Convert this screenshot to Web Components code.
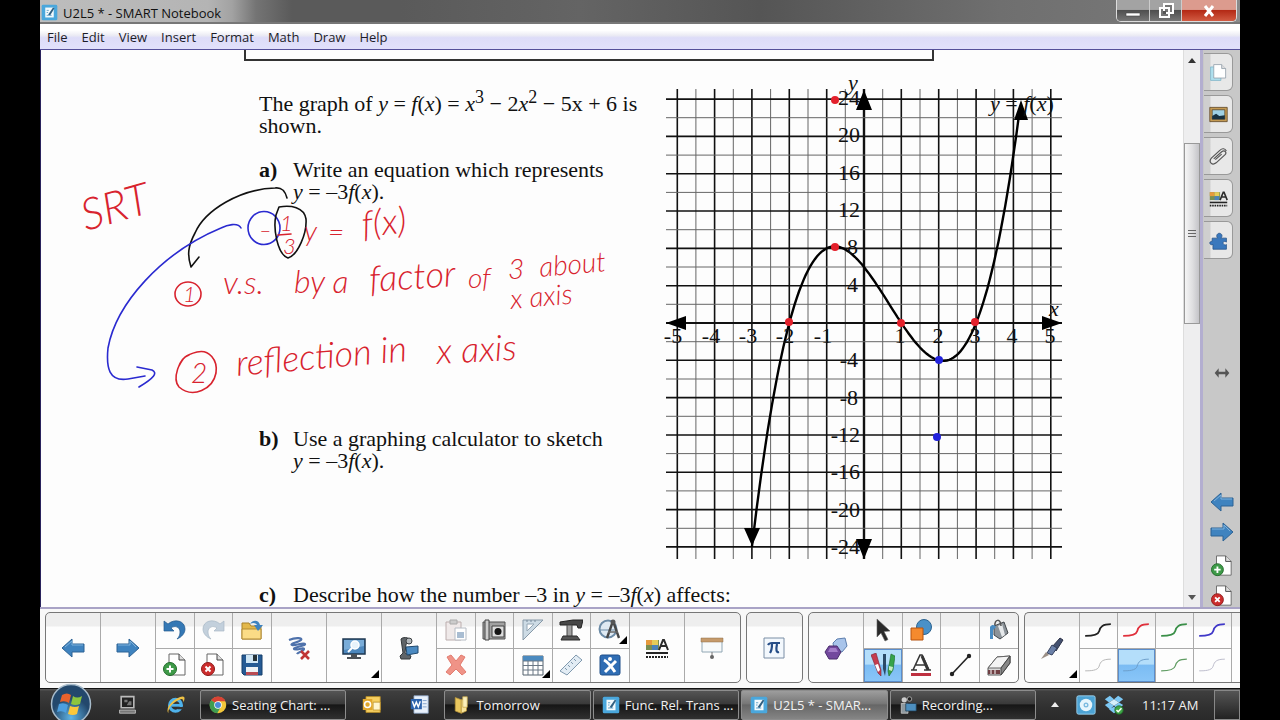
<!DOCTYPE html>
<html lang="en">
<head>
<meta charset="utf-8">
<title>U2L5 * - SMART Notebook</title>
<style>
html,body{margin:0;height:100%;background:#000}
body{font-family:"Open Sans","Noto Sans",sans-serif;overflow:hidden}
</style>
</head>
<body>
<nb-app></nb-app>
<script>
const ICONS = {
  left:'<path d="M1 12 11 3v5h12v8H11v5z" fill="#3f83bf" stroke="#2d6395"/><path d="M4 11 11 5v4h11" fill="none" stroke="#7fb2dc"/>',
  right:'<path d="M23 12 13 3v5H1v8h12v5z" fill="#3f83bf" stroke="#2d6395"/><path d="M20 11 14 5v4H2" fill="none" stroke="#7fb2dc"/>',
  undo:'<path d="M1 3v10h10L8 10c4-3 9-1 9 4 0 3-1 5-3 7 5-2 8-6 8-10C22 3 12 0 5 6z" fill="#3478b5" stroke="#24598c" stroke-width=".7"/>',
  redo:'<path d="M23 3v10H13l3-3c-4-3-9-1-9 4 0 3 1 5 3 7-5-2-8-6-8-10C2 3 12 0 19 6z" fill="#c3d0dc" stroke="#a9b8c6" stroke-width=".7"/>',
  addpage:'<path d="M6 1h10l6 6v15H6z" fill="#fff" stroke="#666"/><path d="M16 1v6h6" fill="#ddd" stroke="#444"/><circle cx="7" cy="16" r="6.500" fill="#3e9a48" stroke="#226a2a"/><path d="M7 12.500v7M3.500 16h7" stroke="#fff" stroke-width="2"/>',
  delpage:'<path d="M6 1h10l6 6v15H6z" fill="#fff" stroke="#666"/><path d="M16 1v6h6" fill="#ddd" stroke="#444"/><circle cx="7" cy="16" r="6.500" fill="#cc2d2d" stroke="#8e1a1a"/><path d="m4.500 13.500 5 5m0-5-5 5" stroke="#fff" stroke-width="2"/>',
  open:'<path d="M2 21V5h7l2 3h10v13z" fill="#e3b84a" stroke="#a9822a"/><path d="M2 21V11h19v10z" fill="#fbdc86" stroke="#b18a33"/><path d="M10 6c3-5 9-4 10 1h3l-5 6-4-6h3c-1-2-4-3-7-1z" fill="#3f83bf"/>',
  save:'<path d="M2 2h20v20H4l-2-2z" fill="#255a94" stroke="#173e6b"/><path d="M6 2h12v8H6z" fill="#cfe6f5"/><path d="M13 2h4v6h-4z" fill="#263238"/><path d="M6 14h12v8H6z" fill="#eef2f5"/><path d="M6 19h12v3H6z" fill="#ba4b52"/>',
  scribble:'<path d="M2 4c7-3 14-2 12 0S2 8 5 9s12-3 13-1S6 11 7 13s10-2 10 0-6 3-7 5" fill="none" stroke="#4f72ab" stroke-width="2.200"/><path d="m14 15 8 8m0-8-8 8" stroke="#c03434" stroke-width="2.600"/>',
  screen:'<path d="M1 3h22v15H1z" fill="#4e88bd" stroke="#1f3952" stroke-width="1.500"/><path d="M2 4h20v6L2 14z" fill="#79acd8"/><circle cx="13" cy="9" r="4" fill="#e8f3fb" stroke="#fff" stroke-width="1.500"/><path d="m10 12-4 4" stroke="#fff" stroke-width="2"/><path d="M9 18h6v3h4v2H5v-2h4z" fill="#4d5257"/>',
  doccam:'<path d="M4 3c3-3 10-1 10 3l-5 2-1 9 6 3-1 3H4l-1-3 3-3z" fill="#5f6468" stroke="#34383b"/><circle cx="12" cy="5" r="3" fill="#b4b9bd" stroke="#3d4144"/><path d="m9 11 12-1v7l-11 2z" fill="#4b8ac1" stroke="#21496e"/>',
  paste:'<path d="M2 4h15v18H2z" fill="#efe9e9" stroke="#bcaeae"/><path d="M6 2h7v4H6z" fill="#ccc" stroke="#aaa"/><path d="M11 10h11v12H11z" fill="#fff" stroke="#b6bcc4"/><path d="M13 14h7v6h-7z" fill="#a9bdd2"/>',
  cross:'<path d="m3 4 4-2 5 6 5-6 4 2-5 8 6 7-4 3-6-6-6 6-4-3 6-7z" fill="#ef9387" stroke="#e27c70"/>',
  camera:'<path d="M1 4h22v17H1z" fill="#a2a2a2" stroke="#505050"/><path d="M3 2h4v20H3z" fill="#cdcdcd" stroke="#444"/><path d="M10 8h12v11H10z" fill="#ddd" stroke="#444"/><circle cx="16" cy="13.500" r="3.500" fill="#151515"/>',
  triangle:'<path d="M2 2h20L2 22z" fill="#cddbe5" stroke="#8799a8"/><path d="M6 6h7l-7 7z" fill="#fff" stroke="#94a6b5"/><path d="M6 2v2m4-2v2m4-2v2" stroke="#76899a"/>',
  table:'<path d="M2 3h20v19H2z" fill="#fff" stroke="#53606c"/><path d="M2 3h20v5H2z" fill="#4b8abf"/><path d="M2 12.500h20M2 17h20M7 8v14M12 8v14M17 8v14M2 8h20" stroke="#697784" fill="none"/>',
  stand:'<path d="M1 4 14 2h10l-2 8h-3l-1-3H1z" fill="#484848" stroke="#222"/><path d="M8 7h5v12H8z" fill="#a2a2a2" stroke="#444"/><path d="M4 18h14l3 4H2z" fill="#565656" stroke="#2d2d2d"/>',
  ruler:'<path d="M1 18 17 2l6 5L8 22z" fill="#e2ecf4" stroke="#8099ae"/><path d="m6 15 2 2m1-5 2 2m1-5 2 2m1-5 2 2" stroke="#8099ae"/>',
  compass:'<circle cx="10" cy="11" r="8.500" fill="#dfeaf3" stroke="#6d8ca7" stroke-width="2"/><path d="M1 12h18" stroke="#6d8ca7"/><path d="M15 3 9 20M15 3l6 17" stroke="#484848" stroke-width="2.400"/><circle cx="15" cy="4" r="2.500" fill="#555"/><path d="M10 14h10" stroke="#666" stroke-width="1.500"/>',
  xman:'<rect x="2" y="2" width="20" height="20" rx="2" fill="#2f6db4" stroke="#1f4f89"/><path d="M6 7c4 2 7 6 11 12M18 8 7 19" fill="none" stroke="#fff" stroke-width="3"/><circle cx="12" cy="6" r="2" fill="#fff"/>',
  props:'<path d="M1 4h13v10H1z" fill="#788e51"/><path d="M1 4h6v5H1z" fill="#e69a3c"/><path d="M7 4h6v5H7z" fill="#e5cc58"/><path d="M7 9h6v5H7z" fill="#4b82b8"/><path d="m14 14 4-10h1l4 10m-7-4h5" fill="none" stroke="#2b2b2b" stroke-width="2"/><path d="M1 17h22" stroke="#242424" stroke-width="2"/><path d="M1 21h22" stroke="#242424" stroke-width="2" stroke-dasharray="2 1"/>',
  shade:'<path d="M2 5h20v11H2z" fill="#f7fafb" stroke="#91a7b4"/><path d="M1 2h22v4H1z" fill="#c59a6b" stroke="#8f6e4b" stroke-width=".5"/><path d="M12 16v4" stroke="#777"/><circle cx="12" cy="21" r="2" fill="#666"/>',
  pi:'<path d="M2 2h20v20H2z" fill="#f3f8fd" stroke="#7b8ea5"/><path d="M6 9c1-2 2-2 4-2h8M10 8c0 4 0 6-2 9M15 8c-1 5-1 9 2 8" fill="none" stroke="#264d87" stroke-width="2.200"/>',
  poly:'<path d="m13 3 8-1 2 8-5 6-8-2-1-7z" fill="#a8c4ea" stroke="#5e7fae"/><path d="M5 10h8l4 6-4 7H5l-4-7z" fill="#73489e" stroke="#4a2d6c"/><path d="M6 12h6l2 4H4z" fill="#a37cc8"/>',
  pointer:'<path d="m6 1 13 12-6 .5 4 8-3 1.500-4-8-4 4z" fill="#2a2a2a" stroke="#666" stroke-width=".6"/>',
  pens:'<path d="m0 2 5-2 5 17 0 6-3-3z" fill="#c53d4f" stroke="#7c2130" stroke-width=".6"/><path d="m4 12 3-1 2 6-2 2z" fill="#fff"/><path d="M12 1h3v15l-1 7-2-7z" fill="#2b4966"/><path d="m20 1 4 2-2 14-4 6-1-5z" fill="#36a34a" stroke="#1d6a2b" stroke-width=".6"/><path d="m18 13 4 1-1 4-3-1z" fill="#c7edc5"/>',
  shapes:'<circle cx="15" cy="9" r="7.500" fill="#4a91c8" stroke="#2b6391"/><path d="M2 10h12v12H2z" fill="#f58a2e" stroke="#b6530e"/>',
  textA:'<path d="M4 17 11 2h2l7 15M7 12h10M2 17h6M15 17h7" fill="none" stroke="#363636" stroke-width="1.600"/><path d="m13 3 6 14" stroke="#363636" stroke-width="3"/><path d="M2 20h20v3H2z" fill="#be3040"/>',
  line:'<path d="M4 21 20 4" stroke="#222" stroke-width="1.600"/><circle cx="4" cy="21" r="2.200" fill="#222"/><circle cx="21" cy="3" r="2.200" fill="#222"/>',
  bucket:'<path d="m7 8 10-4 4 11-8 6-6-4z" fill="#8c9399" stroke="#42474b"/><path d="m11 8 4-2 3 11-3 2z" fill="#e6e9eb"/><path d="M8 8C7 1 14 0 14 8" fill="none" stroke="#555" stroke-width="1.500"/><path d="M3 9c2-3 5-2 6 0l-3 3v9H3z" fill="#4a8cc2"/>',
  eraser:'<path d="m1 15 9-11 13-1v7l-9 12H1z" fill="#dadada" stroke="#555"/><path d="m1 15 9-11 13-1-9 12z" fill="#f4f4f4" stroke="#666"/><path d="m14 15 9-12v7l-9 12z" fill="#888" stroke="#444"/><path d="M1 17h12v4H1z" fill="#704044"/><path d="M4 17v4m4-4v4" stroke="#fff"/>',
  brush:'<path d="m12 11 8-9 3 2-7 11z" fill="#445170" stroke="#2c3247"/><path d="m7 17 5-8 5 3-5 7z" fill="#6b80a8" stroke="#37435f"/><path d="m1 23 5-7 3 3z" fill="#9b8f86"/>',
  pages:'<path d="M2 5h13v17H2z" fill="#afe0ee" stroke="#7db4c9"/><path d="M6 2h10l5 5v12H6z" fill="#fff" stroke="#8f9ca7"/><path d="M16 2v5h5" fill="#ddd" stroke="#8f9ca7"/>',
  gallery:'<path d="M1 3h22v18H1z" fill="#c49a53" stroke="#5d4523"/><path d="M4 6h16v12H4z" fill="#9fd1e4" stroke="#5d4523"/><path d="m4 14 5-3 4 3 7-1v5H4z" fill="#183241"/>',
  clip:'<path d="m6 15 10-9c4-3 7 1 4 4L9 20c-5 4-10-1-6-6L14 4c3-3 6-2 8 1M8 16l8-7" fill="none" stroke="#565656" stroke-width="1.500"/>',
  puzzle:'<path d="M4 9h7c-3-3 0-7 3-6s3 4 1 6h7v5c-3-2-5 0-4 2s3 2 4 1v6H5v-6c-4 2-6-4-1-4z" fill="#3a78bd" stroke="#275489"/>',
  expand:'<path d="m1 12 6-7v5h10V5l6 7-6 7v-5H7v5z" fill="#555"/>',
  smart:'<rect x="1" y="1" width="22" height="22" rx="2" fill="#4aa7dc"/><path d="M6 5h12v14H6z" fill="#f3fafd"/><path d="m10 15 7-10 2 1-6 10z" fill="#315f80"/><path d="M8 9h3m-3 3h2M8 16h7" stroke="#3a89b8"/>',
  laptop:'<path d="M4 2h16v14H4z" fill="#222" stroke="#bbb" stroke-width="2"/><path d="M8 6h4v3H8zm6 2h3v5h-6z" fill="#777"/><path d="M2 19h20v4H2z" fill="#777" stroke="#ccc"/>',
  ie:'<circle cx="12" cy="13" r="7.500" fill="none" stroke="#4fb2ea" stroke-width="4"/><path d="M6 13h14" stroke="#4fb2ea" stroke-width="3.500"/><path d="M14 15h9v3h-8z" fill="#333"/><path d="M3 23C-2 16 11 3 21 2c3 0 3 3 1 7 0-4-2-5-5-3C9 9 2 17 3 23z" fill="#efc245"/>',
  chrome:'<circle cx="12" cy="12" r="11" fill="#f3c73b"/><path d="M12 12 3 5.500A11 11 0 0 1 22 7H12z" fill="#d94335"/><path d="M3 5.500A11 11 0 0 0 11 23l5-9-4-2z" fill="#3f9d50"/><circle cx="12" cy="12" r="5" fill="#fff"/><circle cx="12" cy="12" r="4" fill="#4b8bd6"/>',
  outlook:'<path d="M5 2h18v20H5z" fill="#f6cf61" stroke="#b98d22"/><path d="M14 9h9v10h-9z" fill="#fff5cf" stroke="#b98d22"/><path d="M1 5h12v14H1z" fill="#e2a72c"/><circle cx="7" cy="12" r="3.800" fill="none" stroke="#fff" stroke-width="2"/>',
  word:'<path d="M5 1h18v22H5z" fill="#e8f1fb" stroke="#8fa9cb"/><path d="M16 7h5m-5 4h5m-5 4h5" stroke="#6f93c3"/><path d="M1 5h14v13H1z" fill="#2c63ad"/><path d="m3 8 2.500 7L8 9l2.500 6L13 8" stroke="#fff" stroke-width="1.800" fill="none"/>',
  folder:'<path d="m3 2 8 3v18l-8-3z" fill="#e9c75e" stroke="#b9963a"/><path d="M11 5h7v15l-7 3z" fill="#f8e49a" stroke="#b9963a"/><path d="M13 1h6v14h-6z" fill="#fbf0bd" stroke="#caa94c"/>',
  recorder:'<path d="M3 10h9v13H3z" fill="#8e999f" stroke="#ccc"/><path d="M9 10h14v10H9z" fill="#4d8fbf" stroke="#1f3b52"/><circle cx="7" cy="5" r="3.500" fill="#ccc"/><circle cx="14" cy="4" r="3" fill="#222" stroke="#bbb"/>',
  disc:'<rect x="1" y="1" width="22" height="22" rx="2" fill="#4da3d4" stroke="#a6d8f2"/><circle cx="12" cy="12" r="7.500" fill="#e6f5fc"/><circle cx="12" cy="12" r="3" fill="#7cbbe0"/><circle cx="12" cy="12" r="1.200" fill="#fff"/>',
  dropbox:'<path d="m7 1 5 4-6 4-5-4zm10 0 6 4-5 4-6-4zM1 12l5-3 6 4-5 4zm11 1 6-4 5 3-6 5zM6 17l6-3 5 4-5 4z" fill="#7cc8f5"/><path d="m12 5 6 4-6 4-6-4z" fill="#d5effc"/><circle cx="18" cy="18" r="5" fill="#40a548" stroke="#1f6e28"/><path d="m15 18 2 2 4-4" stroke="#fff" stroke-width="1.800" fill="none"/>'
};
const stroke = (c,w)=>`<path d="M1 17c4 0 11 0 12-4S16 7 23 7" fill="none" stroke="${c}" stroke-width="${w}"/>`;
Object.assign(ICONS,{
  sBlack:stroke('#222',1.5), sRed:stroke('#e0303c',1.5), sGreen:stroke('#3a8f48',1.5), sBlue:stroke('#4038c8',1.5),
  tGray:stroke('#b3b3b3',.8), tBlue:stroke('#6b9cc8',.8), tGreen:stroke('#5f9c62',1), tLight:stroke('#b9b9c9',.8)
});

const define = (name, html, setup) => {
  customElements.define(name, class extends HTMLElement {
    connectedCallback(){
      if (this.shadowRoot) return;
      const root = this.attachShadow({mode:'open'});
      root.innerHTML = typeof html === 'function' ? html(this) : html;
      if (setup) setup(root, this);
    }
  });
};

define('nb-icon', el => `<style>:host{display:block;flex:none;width:var(--icon,24px);height:var(--icon,24px)}svg{display:block;width:100%;height:100%}</style>
<svg viewBox="0 0 24 24" aria-hidden="true">${ICONS[el.getAttribute('name')]||''}</svg>`);

define('nb-titlebar', `<style>
:host{display:flex;height:24px;box-sizing:border-box;align-items:flex-start;border-bottom:2px solid #777;padding:0 3px 0 1px;
background:linear-gradient(90deg,#bdbdbd 0,#b4b4b4 14%,#a2a2a2 16%,#747474 18%,#5a5a5a 21%,#5a5a5a 30%,#646464 45%,#555 60%,#6f6f6f 80%,#777 93%,#8a8a8a 100%)}
nb-icon{--icon:17px;margin:4px 5px 0 0}
h1{margin:0;flex:1;font-size:13px;line-height:26px;font-weight:400;color:#111}
.w{display:flex;height:21px;border:1px solid #ddd;border-top:0;border-radius:0 0 5px 5px;overflow:hidden}
button{border:0;padding:0;width:32px;background:linear-gradient(#a3a3a3 0 45%,#4f4f4f 50%,#767676);display:grid;place-items:center}
button+button{border-left:1px solid #ccc}
.x{width:55px;background:linear-gradient(#dc9b8e 0 45%,#b42a16 50%,#d25b42)}
svg{display:block}
</style><nb-icon name="smart"></nb-icon><h1>U2L5 * - SMART Notebook</h1>
<div class="w"><button aria-label="Minimize"><svg width="18" height="18"><path d="M2 11h14v3H2z" fill="#fff" stroke="#444" stroke-width=".6"/></svg></button>
<button aria-label="Restore"><svg width="18" height="18"><path d="M7 2h9v9H7zM3 6h9v9H3z" fill="#777" stroke="#fff" stroke-width="2"/><path d="M6 9h3v3H6z" fill="#555"/></svg></button>
<button class="x" aria-label="Close"><svg width="18" height="18"><path d="m5 4 8 10M13 4 5 14" stroke="#fff" stroke-width="3"/></svg></button></div>`);

define('nb-menubar', `<style>
:host{display:flex;height:26px;box-sizing:border-box;border-bottom:1px solid #55509a;align-items:center;padding:0;background:linear-gradient(#fff 0 25%,#ececf4 45%,#dddcf8 55%,#e2e1fb)}
button{border:0;background:none;margin:0;padding:0 7px;font:13px/22px "Open Sans","Noto Sans",sans-serif;color:#1c1c28}
</style>${['File','Edit','View','Insert','Format','Math','Draw','Help'].map(t=>`<button>${t}</button>`).join('')}`);

define('nb-graph', () => {
  const u=37.35, v=9.33, X=x=>208+x*u, Y=y=>251-y*v; let g='';
  for(let i=-10;i<=10;i++){const x=X(i/2).toFixed(1);g+=`<path d="M${x} 17V487" stroke="${i%2?'#666':'#111'}" stroke-width="${i===0?2.4:i%2?1:1.6}"/>`}
  for(let i=-12;i<=12;i++){const y=Y(i*2).toFixed(1);g+=`<path d="M10 ${y}H406" stroke="${i%2?'#666':'#111'}" stroke-width="${i===0?2.2:i%2?1:1.6}"/>`}
  let d='';for(let x=-3;x<=4.18;x+=.06)d+=(d?'L':'M')+X(x).toFixed(1)+' '+Y(x**3-2*x*x-5*x+6).toFixed(1);
  let t='';
  for(const y of [24,20,16,12,8,4,-4,-8,-12,-16,-20,-24])t+=`<text x="${Math.abs(y)<10?202:204}" y="${Math.round(Y(y))+(y>0?6:7)}" text-anchor="end">${y}</text>`;
  for(const x of [-5,-4,-3,-2,-1,1,2,3,4,5])t+=`<text x="${Math.round(X(x))-(x<0?4:1)}" y="271" text-anchor="middle">${x}</text>`;
  const dots=[[179,28],[179,175],[133,250],[245,251],[319,250]].map(p=>`<circle cx="${p[0]}" cy="${p[1]}" r="4" fill="#e3202b"/>`).join('')+[[283,288],[281,365]].map(p=>`<circle cx="${p[0]}" cy="${p[1]}" r="4" fill="#2222dc"/>`).join('');
  return `<style>:host{display:block}svg{display:block;width:410px;height:496px;overflow:visible}text{font:22px "Liberation Serif",serif;fill:#111}.i{font-style:italic}</style>
<svg viewBox="0 0 410 496" role="img" aria-label="Graph of y = f(x)">${g}<path d="${d}" fill="none" stroke="#000" stroke-width="2.400"/>
<path d="M208 18l8 20h-16zM208 487l8-20h-16zM10 251l20-7v14zM406 251l-20-7v14zM96 474l8-18h-16zM365 28l7 20h-14z" fill="#000"/>${t}
<text class="i" x="192" y="18">y</text><text class="i" x="393" y="244">x</text>
<text x="334" y="39"><tspan class="i">y</tspan> = <tspan class="i">f</tspan>(<tspan class="i">x</tspan>)</text>${dots}</svg>`;
});

define('nb-ink', `<style>:host{display:block;pointer-events:none}svg{display:block;width:620px;height:350px;overflow:visible}
text{font:italic 300 28px Lato,sans-serif;fill:#d8232e}.n{font-size:22px}.m{font-size:32px}.l{font-size:36px}.xl{font-size:44px}path,ellipse{fill:none;stroke-width:1.600;stroke-linecap:round;stroke-linejoin:round}.k{stroke:#111}.b{stroke:#2a2ad0}.r{stroke:#d8232e}</style>
<svg viewBox="41 50 620 350">
<text class="xl" transform="translate(86 231) rotate(-16)">SRT</text>
<path class="k" d="M287 198c-2-7-5-11-12-10-35 1-70 22-80 45-7 13-8 22-4 34l8-10"/>
<path class="b" d="M241 228c-3-6-14-3-20 0-60 25-105 76-113 120-2 20 1 34 20 31l17-3M137 367l15 3c6 3 2 8-13 17"/>
<ellipse class="b" cx="264" cy="228" rx="16" ry="16.500"/>
<path class="k" d="M279 207c12-2 25 0 27 12 1 14-8 36-18 39-11-4-15-30-12-43z"/>
<text x="259" y="238" class="n">–</text><text x="280" y="231" class="n">1</text><path class="r" d="M278 235l13-1"/><text x="283" y="254" class="n">3</text>
<text x="304" y="241">y</text><text x="328" y="242">=</text><text class="l" transform="translate(363 237) rotate(-6)">f(x)</text>
<ellipse class="r" cx="188" cy="294" rx="13" ry="12"/><text x="183" y="302" class="n">1</text>
<text x="223" y="294" class="m">v.s.</text><text x="294" y="293" class="m">by a</text>
<text class="l" transform="translate(370 292) rotate(-4)">factor</text><text x="468" y="288">of</text>
<text x="508" y="279">3</text><text transform="translate(540 277) rotate(-5)">about</text><text transform="translate(511 309) rotate(-5)">x axis</text>
<path class="r" d="M189 355c-10 3-17 24-10 32 14 12 34 2 37-14 2-13-7-24-19-21s-14 6-18 14"/><text x="191" y="383">2</text>
<text class="l" transform="translate(237 376) rotate(-5)">reflection in</text><text class="l" transform="translate(437 364) rotate(-3)">x axis</text>
</svg>`);

define('nb-page', `<style>
:host{display:block;position:relative;overflow:hidden;background:#fdfdfd;color:#111;font:22px/22px "Liberation Serif",serif;border-left:1px solid #29235c}
.box{height:9px;width:686px;margin-left:203px;border:2px solid #333;border-top:0}
.cols{display:grid;grid-template-columns:397px 410px;padding:11px 0 0 218px}
p{margin:0}sup{font-size:18px;line-height:0}
.t{padding-top:21px}
.q{display:grid;grid-template-columns:34px auto;margin-top:22px;white-space:nowrap}
.q2{margin-top:225px}.q3{margin:16px 0 0 218px}
nb-ink{position:absolute;left:0;top:0}
</style><div class="box"></div><div class="cols"><div class="t">
<p>The graph of <i>y</i> = <i>f</i>(<i>x</i>) = <i>x</i><sup>3</sup> − 2<i>x</i><sup>2</sup> − 5x + 6 is<br>shown.</p>
<div class="q"><b>a)</b><p>Write an equation which represents<br><i>y</i> = –3<i>f</i>(<i>x</i>).</p></div>
<div class="q q2"><b>b)</b><p>Use a graphing calculator to sketch<br><i>y</i> = –3<i>f</i>(<i>x</i>).</p></div>
</div><nb-graph></nb-graph></div>
<div class="q q3"><b>c)</b><p>Describe how the number –3 in <i>y</i> = –3<i>f</i>(<i>x</i>) affects:</p></div>
<nb-ink></nb-ink>`);

define('nb-scrollbar', `<style>:host{display:flex;flex-direction:column;align-items:center;width:16px;background:#eeeeef;border-right:3px solid #b3aed0;border-left:1px solid #ddd}
button{border:0;background:none;padding:0;height:20px;width:100%;display:grid;place-items:center}
.track{flex:1;width:100%;padding-top:73px;box-sizing:border-box}.thumb{height:181px;box-sizing:border-box;border:1px solid #999;background:linear-gradient(90deg,#f5f5f5,#dedee0 55%,#c4c4c8);display:grid;place-items:center}svg{display:block}</style>
<button aria-label="Scroll up"><svg width="8" height="5"><path d="M0 5l4-5 4 5z" fill="#333"/></svg></button>
<div class="track"><div class="thumb"><svg width="8" height="10"><path d="M0 1.500h8M0 4.500h8M0 7.500h8" stroke="#666"/></svg></div></div>
<button aria-label="Scroll down"><svg width="8" height="5"><path d="M0 0l4 5 4-5z" fill="#555"/></svg></button>`);

define('nb-sidebar', `<style>:host{display:flex;flex-direction:column;width:37px;background:#c8c8c8;box-sizing:border-box;padding:3px 0 0 1px}
button{border:0;background:none;padding:0;display:grid;place-items:center}
.tabs{display:grid;gap:4px;width:29px}.tabs button{height:38px;border:1px solid #999;border-left:0;border-radius:0 6px 6px 0;background:linear-gradient(90deg,#cfcfcf 0 6px,#e8e8e8 7px);--icon:19px}
.mid{flex:1;display:grid;place-items:center;--icon:16px}.nav{display:grid;width:36px}.nav button{height:30px;--icon:24px}.nav .p{--icon:22px;align-items:end}</style>
<div class="tabs">${['pages','gallery','clip','props','puzzle'].map(n=>`<button aria-label="${n}"><nb-icon name="${n}"></nb-icon></button>`).join('')}</div>
<div class="mid"><nb-icon name="expand"></nb-icon></div>
<div class="nav"><button aria-label="Previous page"><nb-icon name="left"></nb-icon></button><button aria-label="Next page"><nb-icon name="right"></nb-icon></button><button class="p" aria-label="Add page"><nb-icon name="addpage"></nb-icon></button><button class="p" aria-label="Delete page"><nb-icon name="delpage"></nb-icon></button></div>`);

define('nb-group', el => `<style>:host{display:grid;grid-auto-flow:column;grid-template-rows:1fr 1fr;box-sizing:border-box;height:71px;min-width:0;overflow:hidden;border:1px solid #777;border-radius:5px;background:linear-gradient(#eeeeee 0 13px,#fdfdfd 14px)}
:host([cut]){border-right:0;border-radius:5px 0 0 5px}</style><slot></slot>`,
 (r,el)=>{el.style.gridTemplateColumns=[...el.getAttribute('cols')].map(c=>({b:'10fr',s:'7fr',h:'minmax(0,1.5fr)'})[c]).join(' ');el.style.flex=el.getAttribute('size')+' 1 0';});

define('nb-tool', el => `<style>:host{display:grid;min-width:0;border-right:1px solid #aaa;position:relative;box-sizing:border-box}
:host([big]){grid-row:span 2}:host([low]){border-top:1px solid #aaa}:host([last]){border-right:0}
:host([on]){background:linear-gradient(#b4defa 0 45%,#7bbcf3 50%,#8ac6f8);box-shadow:inset 0 0 0 1px #5a8dcc}
button{border:0;background:none;padding:0;display:grid;place-items:center;width:100%;min-width:0;--icon:24px}:host([wide]) button{--icon:28px}
i{position:absolute;right:2px;bottom:4px;border:4px solid;border-color:transparent #000 #000 transparent}</style>
<button aria-label="${el.getAttribute('icon')||'Empty'}"><nb-icon name="${el.getAttribute('icon')||''}"></nb-icon></button>${el.hasAttribute('more')?'<i></i>':''}`);

define('nb-toolbar', `<style>:host{display:flex;gap:5px;padding:3px 0 5px 5px;box-sizing:border-box;height:81px;background:#f8f8f8;border-top:2px solid #a9a3c6}</style>
<nb-group cols="bbsssbbbsssssbb" size="126">
<nb-tool big icon="left"></nb-tool><nb-tool big icon="right"></nb-tool>
<nb-tool icon="undo"></nb-tool><nb-tool low icon="addpage"></nb-tool><nb-tool icon="redo"></nb-tool><nb-tool low icon="delpage"></nb-tool><nb-tool icon="open"></nb-tool><nb-tool low icon="save"></nb-tool>
<nb-tool big icon="scribble"></nb-tool><nb-tool big more icon="screen"></nb-tool><nb-tool big icon="doccam"></nb-tool>
<nb-tool icon="paste"></nb-tool><nb-tool low icon="cross"></nb-tool><nb-tool icon="camera"></nb-tool><nb-tool low></nb-tool><nb-tool icon="triangle"></nb-tool><nb-tool low more icon="table"></nb-tool><nb-tool icon="stand"></nb-tool><nb-tool low icon="ruler"></nb-tool><nb-tool more icon="compass"></nb-tool><nb-tool low icon="xman"></nb-tool>
<nb-tool big icon="props"></nb-tool><nb-tool big last icon="shade"></nb-tool></nb-group>
<nb-group cols="b" size="10"><nb-tool big last icon="pi"></nb-tool></nb-group>
<nb-group cols="bssss" size="38"><nb-tool big icon="poly"></nb-tool><nb-tool icon="pointer"></nb-tool><nb-tool low on icon="pens"></nb-tool><nb-tool icon="shapes"></nb-tool><nb-tool low icon="textA"></nb-tool><nb-tool></nb-tool><nb-tool low icon="line"></nb-tool><nb-tool last icon="bucket"></nb-tool><nb-tool low last icon="eraser"></nb-tool></nb-group>
<nb-group cut cols="bssssh" size="39"><nb-tool big more icon="brush"></nb-tool><nb-tool wide icon="sBlack"></nb-tool><nb-tool wide low icon="tGray"></nb-tool><nb-tool wide icon="sRed"></nb-tool><nb-tool wide low on icon="tBlue"></nb-tool><nb-tool wide icon="sGreen"></nb-tool><nb-tool wide low icon="tGreen"></nb-tool><nb-tool wide icon="sBlue"></nb-tool><nb-tool wide low icon="tLight"></nb-tool></nb-group>`);

define('nb-task', el => `<style>:host{display:block;flex:1 1 0;min-width:0}
button{width:100%;height:30px;display:flex;align-items:center;gap:5px;padding:0 0 0 8px;border:1px solid #8d8d8d;border-radius:2px;background:linear-gradient(#555,#3a3a3a 45%,#161616 50%,#303030);color:#f2f2f2;font:13px/28px "Open Sans","Noto Sans",sans-serif;white-space:nowrap;--icon:18px}
:host([active]) button{background:linear-gradient(#9d9d9d,#777 45%,#666 50%,#858585)}</style>
<button><nb-icon name="${el.getAttribute('icon')}"></nb-icon><slot></slot></button>`);

define('nb-taskbar', `<style>:host{display:flex;gap:2px;height:32px;box-sizing:border-box;border-top:1px solid #111;align-items:center;background:linear-gradient(#5a5a5a,#3e3e3e 8%,#303030 60%,#2a2a2a)}
.q{border:0;background:none;padding:0;width:46px;height:30px;display:grid;place-items:center;--icon:19px;flex:none}
.start{width:62px}.start svg{margin-top:-7px}
.tray{flex:none;width:202px;display:flex;align-items:center;height:31px}
.tray nb-icon{--icon:20px}.up{width:8px;margin:0 17px 0 13px}.tray nb-icon+nb-icon{margin:0 18px 0 8px}
time{flex:1;color:#f0f0f0;font-size:13px;white-space:nowrap}.desk{width:26px;height:30px;padding:0;border:1px solid #888;background:linear-gradient(#555,#222)}</style>
<button class="q start" aria-label="Start"><svg width="42" height="42" viewBox="0 0 42 42"><defs><radialGradient id="o" cy=".85"><stop stop-color="#5fb4e6"/><stop offset="1" stop-color="#23486c"/></radialGradient></defs><circle cx="21" cy="21" r="19.500" fill="url(#o)" stroke="#a8bccb" stroke-width="1.500"/><path d="M12 12q5-3 9 0l-2 8q-4-3-9-1z" fill="#e8622c"/><path d="M23 13q4 3 9 0l-2 8q-5 2-9 0z" fill="#8cc63e"/><path d="M9 21q5-2 9 1l-2 8q-4-3-9-1z" fill="#4c9fe0"/><path d="M20 23q5 2 9 0l-2 8q-4 2-9 0z" fill="#fbc73b"/></svg></button>
<button class="q" aria-label="Computer"><nb-icon name="laptop"></nb-icon></button><button class="q" aria-label="Internet Explorer"><nb-icon name="ie"></nb-icon></button>
<nb-task icon="chrome">Seating Chart: ...</nb-task>
<button class="q" aria-label="Outlook"><nb-icon name="outlook"></nb-icon></button><button class="q" aria-label="Word"><nb-icon name="word"></nb-icon></button>
<nb-task icon="folder">Tomorrow</nb-task><nb-task icon="smart">Func. Rel. Trans ...</nb-task><nb-task active icon="smart">U2L5 * - SMAR...</nb-task><nb-task icon="recorder">Recording...</nb-task>
<div class="tray"><svg class="up" width="8" height="6"><path d="M0 5l4-5 4 5z" fill="#eee"/></svg><nb-icon name="disc"></nb-icon><nb-icon name="dropbox"></nb-icon><time>11:17 AM</time><button class="desk" aria-label="Show desktop"></button></div>`);

define('nb-app', `<style>:host{display:flex;flex-direction:column;height:100vh;margin:0 40px;overflow:hidden}
main{flex:1;display:flex;min-height:0}nb-page{flex:1;min-width:0}nb-scrollbar,nb-sidebar,nb-titlebar,nb-menubar,nb-toolbar,nb-taskbar{flex:none}</style>
<nb-titlebar></nb-titlebar><nb-menubar></nb-menubar><main><nb-page></nb-page><nb-scrollbar></nb-scrollbar><nb-sidebar></nb-sidebar></main><nb-toolbar></nb-toolbar><nb-taskbar></nb-taskbar>`);
</script>
</body>
</html>
